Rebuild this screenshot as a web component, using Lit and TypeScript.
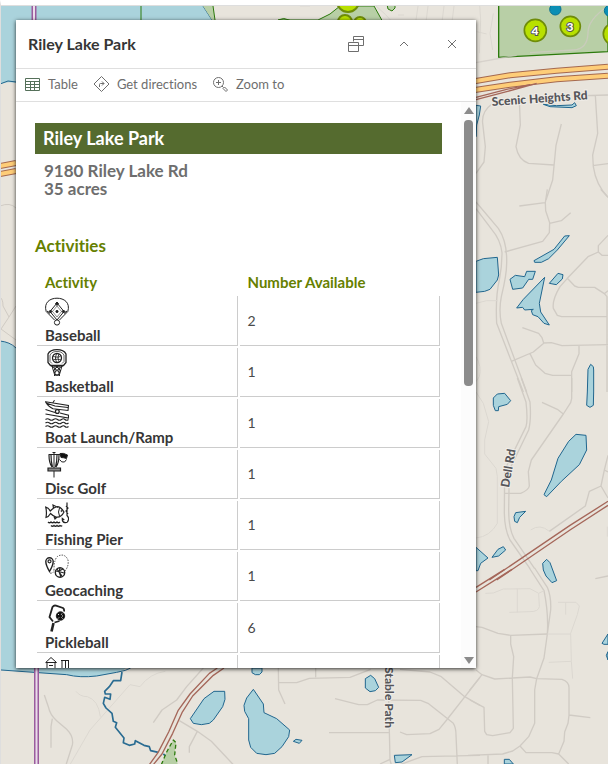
import { LitElement, html, svg, css, type SVGTemplateResult } from "lit";
import { customElement } from "lit/decorators.js";

interface Activity {
  name?: string;
  count?: number;
  icon: SVGTemplateResult;
  tall?: boolean;
}

const activities: Activity[] = [
  {
    name: "Baseball",
    count: 2,
    tall: true,
    icon: svg`<path d="M9.500 22.500 1.200 14C-1.500 5 5 .7 12 .7S25.500 5 22.800 14L14.500 22.500"/><path d="M12 5.500 19 14 12 22.500 5 14Z"/><path d="M12 8.500 16.500 14 12 19.500 7.500 14Z" stroke-width=".5"/><circle cx="12" cy="14" r="1.100" fill="#222"/><path d="M12 4.500 13.500 6 12 8 10.500 6ZM4 14l1.500-1.500L7 14l-1.500 1.500ZM17 14l1.500-1.500L20 14l-1.500 1.500Z" fill="#222"/><circle cx="12" cy="25" r="2.600"/><path d="M2 13.500 5 16M22 13.500 19 16"/>`,
  },
  {
    name: "Basketball",
    count: 1,
    icon: svg`<path d="M5.500 16.500 3 13.500V5C5 1 9 .7 12 .7S19 1 21 5v8.500l-2.500 3Z" stroke-width="1.300"/><path d="M7 14.500 5 12.500V6c2-3 4-3.500 7-3.500S17 3 19 6v6.500l-2 2" stroke-width=".7"/><circle cx="12" cy="9" r="4.500" stroke-width="1.300"/><path d="M8 7c4 2 7 1 8-.5M8 11c3-1 6-1 8 0M12 4.500c-2 3-2 6 0 9M14 5c-1.500 3-1 6 .5 8" stroke-width=".9"/><path d="M6 17h12M7 17l3 10M17 17l-3 10M7 17l8 7M17 17l-8 7M11 17l5 5M13 17l-5 5M10 17v10M14 17v10M9 27l2-2 1 2 1-2 2 2"/>`,
  },
  {
    name: "Boat Launch/Ramp",
    count: 1,
    icon: svg`<path d="M.5 1.800 23.500 5.500 23 10.500 8 8.800Q2.500 6 .5 1.800ZM1 3 10 6l13 1.500M8 2.500l1.500-2.200" stroke-width="1.100"/><path d="M.5 9.500 10 12.500M15 13l8.500 2.200V18L.5 14" stroke-width="1.100"/><circle cx="12.300" cy="11.500" r="1.900" stroke-width="1.300"/><path d="M.5 19.500q2-1.500 4 0t4 0 4 0 4 0 3.500 0 3.500 0M.5 23q2-1.500 4 0t4 0 4 0 4 0 3.500 0 3.500 0M.5 26.500q2-1.500 4 0t4 0 4 0 4 0 3.500 0 3.500 0" stroke-width="1.200"/>`,
  },
  {
    name: "Disc Golf",
    count: 1,
    icon: svg`<path d="M3.500 3.500h12M7.500 1.500h3" stroke-width="1.200"/><path d="M9 1.500v16M9 20v6.500" stroke-width="1"/><path d="M4 4q0 8 3 12M6 4q0 7 1.500 12M14 4q0 8-3 12M12 4q0 7-1.500 12" stroke-width="1.200"/><path d="M3 17h12.500v3H3Z" fill="#888" stroke-width="1.200"/><path d="M15 2.500q3-1 7.500 1.500l-1 3.500q-3-1-5.500-1Z" fill="#111"/><path d="M14.500 8.500q2 3.500 5 2.500l2-2.500"/>`,
  },
  {
    name: "Fishing Pier",
    count: 1,
    icon: svg`<path d="M.7 5q3 1 4.500 4Q8 6 11 5q4-1.500 8 5-3 6-8 5-3-1-5.500-3.500Q3.500 15 1 15.500 2 10 .7 5ZM8.500 6.500 8 3l5 2.500M9 14.500l1 2.500 2-2" stroke-width="1.200"/><path d="M14.500 6q-2 4 0 8"/><circle cx="16.500" cy="9" r=".6"/><path d="M22 .5v13q2 2 1.500 4-.7 3.500-3.500 3.200-3-.4-2.700-4.200l2 1.500M21 4l2 2-2 3 2 3" stroke-width="1.200"/><path d="M3 20q1.500 1.500 3 0 1.500 1.500 3 0 1.500 1.500 3 0 1.500 1.500 3 0M6 23.500q1.500 1.500 3 0 1.500 1.500 3 0 1.500 1.500 3 0 1.500 1 2 0" stroke-width="1.300"/>`,
  },
  {
    name: "Geocaching",
    count: 1,
    icon: svg`<path d="M4.500 18.500Q.8 12 .8 8.500A3.700 3.700 0 0 1 8.200 8.500Q8.200 12 4.500 18.500Z" stroke-width="1.400"/><circle cx="4.500" cy="8.300" r="1.500" stroke-width="1.200"/><path d="M5 20q4 1 4-4 0-10 4-13 7-3 10 4 1 6-3 11" stroke-width=".8" stroke-dasharray="1.500 1.200"/><circle cx="15" cy="19.500" r="4.700" stroke-width="1.400"/><path d="M11 18q5 1 8 2M15 15l-1 4 2 5M12 16l5 7M18 16l-4 2" stroke-width="1.100"/>`,
  },
  {
    name: "Pickleball",
    count: 6,
    tall: true,
    icon: svg`<path d="M8 17 4.500 12.500 7.500 2.500Q9 .5 11 1.200l7 2.300Q19.500 4.500 19 7M9.500 18l5-1.500" stroke-width="1.800"/><path d="M8.500 18.500 6.500 27" stroke-width="2.600"/><circle cx="15.500" cy="11.500" r="4.200" fill="#111"/><path d="m13 9.500 1 1M17 9l-.7 1.200M13 14l1-1M17.500 14l-1-1M18 11.500h-1" stroke="#fff" stroke-width=".9"/>`,
  },
  {
    icon: svg`<path d="M.7 6.500 6 1.500 11.500 6.500ZM2 6.500v9M10 6.500v9M4 9.500h4"/><path d="M16 4.500h8M17 4.500V15M20.500 4.500V15M23.500 4.500V15"/>`,
  },
];

/* Map artwork. Each sheet is drawn at three units per map pixel. */
const sheet = (x: number, y: number, art: SVGTemplateResult) =>
  svg`<g transform="translate(${x} ${y}) scale(.33333)">${art}</g>`;

const northEast = svg`
  <path class="minor" d="M28 0 32 60 28 160M70 40 60 100 68 150M20 95 50 102"/>
  <path class="park" d="M86 0V172L414 155V0Z"/>
  <path class="road" d="M18 188 140 166M180 158 310 150Q352 148 354 100 352 60 414 18" opacity=".7"/>
  <path class="casing" d="M0 246 120 226 260 212 414 200"/><path class="highway" d="M0 246 120 226 260 212 414 200"/>
  <path class="casing" d="M0 272 120 254 260 238 414 227"/><path class="highway" d="M0 272 120 254 260 238 414 227"/>
  <path class="ramp" d="M18 292 110 268 180 254M18 299 110 275 200 250"/>
  <path class="road" d="M66 312Q34 335 38 370L46 440 42 486 18 520M148 300 151 375 138 440Q145 480 176 490L252 495M274 372 258 436 248 540 228 600M376 286 383 400 368 465 370 500Q378 555 414 592M368 497 414 491M340 287 414 285"/>
  <path class="water" d="M18 316 32 318 28 345 20 375 18 410ZM220 313 260 317 306 315 314 308 319 317 306 323 240 320Z"/>
  <circle class="pond" cx="256" cy="28" r="17"/><circle class="pond" cx="420" cy="32" r="17"/>
  <circle class="pin" cx="196" cy="91" r="33"/><circle class="pin" cx="301" cy="79" r="30"/><circle class="pin" cx="432" cy="102" r="32"/>
`;

const east = svg`
  <path class="road" d="M18 56 65 118Q92 150 96 188 96 230 88 270 76 320 80 400L160 606"/>
  <path class="road" d="M18 36 85 115Q112 155 110 220 110 255 94 320 86 360 94 400L170 606"/>
  <path class="road" d="M104 186 218 154 238 128 239 98 227 62 226 38 232 -2M148 48 225 38M239 100 274 92 302 68M392 -2 414 22M414 136 385 167V186L396 196H414M385 186 354 200 292 265 270 290Q246 330 250 355L262 376 275 380H411M292 265 314 288 325 292H374L403 311 414 302M403 311 411 320V606M157 413 206 430 216 443 221 459M124 514 190 486 222 459 244 458 276 467 414 464M180 491 197 525 225 550 248 556H304M327 467V491L305 545V606"/>
  <path class="minor" d="M18 340Q50 328 82 332M18 500Q36 530 28 560L18 575"/>
  <path class="water" d="M18 214 40 206 82 202 86 255 82 270 60 298 44 304 18 307ZM192 212 252 178 284 138 298 137 262 180 236 206 214 217H194ZM128 298 120 268 136 256 164 260 170 244H196L188 268 176 268 158 294ZM238 280 264 250 279 254 277 267 259 284ZM224 262 208 340 212 366 238 405 222 400 204 380 188 374 184 362 190 358 164 360 158 352 140 354 160 328Z"/>
`;

const southEast = svg`
  <path class="road" d="M142 -6 168 66Q174 120 168 140L104 270 103 400Q104 450 120 480L180 566M154 -6 180 66Q184 120 176 150L118 270 116 390Q116 445 132 475L194 566"/>
  <path class="road" d="M305 -6V56L302 68 280 102 184 240 175 275 178 318Q176 330 152 340H103M216 67 262 88 280 102M238 454 346 378 358 334 393 318 403 270 414 226M393 318 414 354M403 270 414 276"/>
  <path class="minor" d="M18 36 40 70 56 125 44 180V222L78 265 82 290V430Q60 470 18 474M182 450Q210 430 238 454M412 440V470"/>
  <path class="rail" d="M58 600 300 436 414 364M80 600 300 450 414 376"/>
  <path class="water" d="M352 36 350 76 360 82 370 76 371 36V-30L370 -40 362 -47 354 -32ZM70 54 82 42 104 40 122 62 112 73 86 80 85 92H76L70 76ZM222 344 244 300 264 235 296 184 318 163 348 166 350 210 328 254 274 304 230 350ZM132 410 137 398 167 394 149 412 142 428 134 424ZM66 532 84 508 100 500 107 510 86 528ZM18 502 54 534 32 550 24 572H18ZM218 550 230 538 240 548 260 602 246 608 228 588 220 570Z"/>
`;

const southEastCorner = svg`
  <path class="road" d="M178 -6 222 62Q236 130 232 192L222 264 200 326 194 360V460L176 500 150 528 128 543 98 552 -6 556M194 -6 232 52Q244 80 242 120L232 192"/>
  <path class="road" d="M18 170 36 172 84 190 122 196 232 192M122 196V222L131 260 127 324 130 475 120 488 68 497 50 494 44 484 42 412 0 390M18 300 36 314 74 327 180 321 200 326 276 328Q298 336 297 354V436L294 460 284 486 282 514 266 552M36 314 -2 362M297 435 361 443M150 528 168 548H246L266 552 296 582M54 556V584"/>
  <path class="minor" d="M46 70 70 69 100 57 180 56 206 70 222 62M142 56V127M206 70 208 110Q206 125 180 125L118 127M264 97H318L328 108 322 134 302 190 304 274 308 326M287 97V134M232 192H302M236 277 304 274"/>
  <path class="road" d="M376 26 414 18"/>
  <path class="rail" d="M18 52 104 -2M18 66 126 -2"/>
  <path class="water" d="M414 192 396 220 402 223H414ZM414 245 409 256 414 270ZM103 582V568H118L130 582Z"/>
`;

const southWest = svg`
  <path class="road" d="M133 165 145 200Q150 225 170 242L200 268Q222 290 217 315L198 375M157 236 153 260V323M610 84 560 140 530 180 486 210 460 248M538 242 592 274 634 304 700 374M592 274 568 320V338"/>
  <path class="minor" d="M210 374 270 270 390 134 420 140Q450 100 496 94M228 154Q240 170 262 170 295 180 301 230"/>
  <path class="lake" d="M3 70H392Q372 95 350 97L290 108Q240 114 200 104L115 98 3 90Z"/><path class="shore" d="M3 90 115 98 200 104Q240 114 290 108L350 97Q380 92 392 84"/>
  <path class="creek" d="M366 96 362 122 340 122 328 140 314 154 316 162 332 162 330 178 314 172 310 190 318 204 336 220 340 244 350 248 346 262 372 294 370 308 388 316 404 312 406 302 432 316 448 320 452 332 478 338M490 342 500 350 502 374"/>
  <path class="park dashed" d="M484 374 500 336 520 300 528 308 524 345 534 374Z"/>
  <path class="gap" d="M660 84 632 100 575 165 540 215 512 280 480 340 454 374"/>
  <path class="rail" d="M652 84 628 100 570 162 534 212 506 276 474 338 448 374M672 84 640 106 578 168 546 218 518 280 486 342 460 374"/>
  <path class="water" d="M571 236 612 176 642 154H674L675 178 668 200 640 240 628 250 604 254 580 250Z"/>
`;

const south = svg`
  <path class="road" d="M115 84 116 150 135 192M116 127 170 128 208 115 330 112 392 88M227 84V112M285 176 356 194H382L412 180 542 181 564 190 640 250Q648 262 648 285L652 374M267 278H446M446 84V181L450 360 454 374M480 276 500 284 570 281 597 268 620 240 720 112M480 88 570 96 604 110 674 170 720 196M420 372 450 358M480 374 546 350 720 346"/>
  <path class="water" d="M40 148 70 192 72 218 110 236 149 270 146 290 126 320 104 340 78 344 50 340 32 322 26 300V236L14 214 12 196 20 174ZM160 304 168 298 186 301 178 310ZM36 84V98L46 104H58L66 96V84ZM376 116 392 106 404 116 416 142 406 152 390 155 376 144ZM463 346 516 344 486 366 466 368Z"/>
`;

const map = svg`
  <rect class="land" width="1600" height="1600"/>
  <path class="lake" d="M0 6H203L212 20 150 83H16Q8 81 0 84Z"/>
  <path class="shore" d="M0 84 8 81 16 82M203 6 212 20"/>
  <path class="park-fill" d="M203 6 212 20H215L213 6Z"/>
  <path class="boundary" d="M141 0V24M213 6 215 20"/>
  <path class="park" d="M278 20Q284 17 289 20L300 24H384L374 6H340L330 14 318 20ZM386 0 388 9 392 11 395 8V0Z"/>
  <path class="minor fine" d="M376 6Q386 14 394 24M418 6 416 20M428 6 426 22M444 6 442 22M454 6 452 22M398 15H404M300 6H310"/>
  <circle class="pin" cx="348" cy="1" r="11"/><circle class="pin" cx="345" cy="22" r="7"/><circle class="pin" cx="360" cy="23" r="6"/>
  <path class="thin-casing" d="M0 166 16 163M0 174 16 171"/><path class="thin-highway" d="M0 166 16 163M0 174 16 171"/>
  <path class="road fine" d="M0 206Q10 202 16 208M0 297Q3 299 3 306L9 317 16 306M9 317 1 329 16 340"/>
  <path class="lake" d="M0 341Q10 342 20 352V668H0Z"/><path class="shore" d="M0 341Q10 342 16 348"/>
  ${sheet(470, 0, northEast)}${sheet(470, 190, east)}${sheet(470, 570, southEastCorner)}${sheet(470, 380, southEast)}
  ${sheet(240, 640, south)}${sheet(0, 640, southWest)}
  <path class="county" d="M34 6V24M36.500 660V1600"/><path class="county-core" d="M34 6V24M36.500 660V1600"/>
  <text class="num" x="535" y="35">4</text><text class="num" x="570" y="31">3</text>
  <text transform="translate(492 106) rotate(-4)">Scenic Heights Rd</text>
  <text transform="translate(509 488) rotate(-80)">Dell Rd</text>
  <text transform="translate(385 667) rotate(90)">Stable Path</text>
`;

@customElement("park-map")
export class ParkMap extends LitElement {
  static styles = css`
    :host { display: block; overflow: hidden; }
    svg { display: block; width: 100%; height: 100%; }
    .land { fill: #e8e4dc; }
    path { fill: none; stroke-linejoin: round; }
    .road { stroke: #d0cbc4; stroke-width: 4; }
    .minor { stroke: #dcd8d1; stroke-width: 3; }
    .fine { stroke-width: 1; }
    .casing { stroke: #a5694f; stroke-width: 18; }
    .highway { stroke: #fecd78; stroke-width: 12; }
    .thin-casing { stroke: #a5694f; stroke-width: 6; }
    .thin-highway { stroke: #fecd78; stroke-width: 4; }
    .ramp, .rail { stroke: #a5675a; stroke-width: 4; }
    .gap { stroke: #e8e4dc; stroke-width: 12; }
    .water { fill: #aad3dc; stroke: #20658e; stroke-width: 3; }
    .lake { fill: #aad3dc; }
    .shore { stroke: #20658e; stroke-width: 1; }
    g .shore { stroke-width: 3; }
    .creek { stroke: #2a6c92; stroke-width: 5; }
    .park { fill: #b8cfa6; stroke: #2c7a0c; stroke-width: 1; }
    .park-fill { fill: #b8cfa6; }
    g .park { stroke-width: 4; }
    g .dashed { stroke-dasharray: 12 8; }
    .boundary { stroke: #2c7a0c; stroke-width: 1; }
    .county { stroke: #9a5c9e; stroke-width: 5; }
    .county-core { stroke: #eadcea; stroke-width: 2; }
    .pond { fill: #0b8fb5; stroke: #0a6f92; stroke-width: 3; }
    .pin { fill: #b8e000; stroke: #6f8c0a; stroke-width: 2; }
    g .pin { stroke-width: 5; }
    text {
      font: 900 12px Lato, "Open Sans", sans-serif;
      fill: #56565a;
      stroke: #f0ede8;
      stroke-width: 2px;
      paint-order: stroke;
    }
    .num { fill: #fff; stroke: #555; text-anchor: middle; }
  `;

  render() {
    return html`<svg viewBox="0 0 608 764" preserveAspectRatio="xMinYMin slice" role="img" aria-label="Map">${map}</svg>`;
  }
}

@customElement("app-root")
export class AppRoot extends LitElement {
  static styles = css`
    :host {
      display: block;
      position: relative;
      box-sizing: border-box;
      height: 100vh;
      padding: 20px 16px 96px;
      overflow: hidden;
      background: #fff;
      color: #363636;
      font-family: Lato, "Open Sans", sans-serif;
      font-variant-ligatures: none;
    }
    * { box-sizing: border-box; }
    park-map { position: absolute; inset: 0; }
    .frame {
      position: absolute;
      inset: 0;
      border-top: 5px solid #fff;
      border-left: 1px solid #dedede;
      box-shadow: inset 0 1px #dedede;
      pointer-events: none;
    }
    .panel {
      position: relative;
      display: flex;
      flex-direction: column;
      width: 100%;
      max-width: 460px;
      height: 100%;
      background: #fff;
      box-shadow: 0 1px 4px rgba(0, 0, 0, 0.8);
    }
    button {
      border: 0;
      padding: 0;
      background: none;
      color: #6e6e6e;
      font: inherit;
      cursor: pointer;
    }
    svg { display: block; fill: none; stroke: currentColor; }
    .header {
      display: flex;
      height: 49px;
      padding-left: 12px;
      border-bottom: 1px solid #dfdfdf;
      align-items: center;
    }
    .header h1 { flex: 1; margin: 0; font-size: 16px; line-height: 20px; font-weight: 700; }
    .header button { display: grid; place-items: center; width: 48px; height: 48px; }
    .toolbar {
      display: flex;
      gap: 15px;
      height: 33px;
      padding: 0 8px 2px;
      border-bottom: 1px solid #dfdfdf;
    }
    .toolbar button { display: flex; align-items: center; gap: 7px; font-size: 13px; line-height: 16px; }
    .toolbar .grid { color: #55705a; }
    .body { display: flex; flex: 1; min-height: 0; }
    .scroll { flex: 1; padding: 21px 19px 0; overflow-y: auto; scrollbar-width: none; }
    .banner {
      margin: 0;
      padding: 0 8px;
      background: #556b2f;
      color: #fff;
      font-size: 18px;
      line-height: 31px;
      font-weight: 700;
    }
    address { padding: 8px 9px 0; color: #6e6e6e; font-size: 17px; line-height: 18px; font-weight: 700; font-style: normal; }
    .section { margin: 37px 0 11px; color: #668000; font-size: 17px; line-height: 22px; font-weight: 700; }
    table { width: 100%; table-layout: fixed; border-collapse: separate; border-spacing: 2px; }
    th { padding: 0 8px; text-align: left; font-size: 15px; line-height: 18px; }
    thead th { height: 24px; color: #668000; }
    tbody th, td { border-right: 1px solid #ccc; border-bottom: 1px solid #ccc; }
    tbody th { padding-top: 1px; padding-bottom: 1px; }
    td { padding: 0 8px; color: #4a4a4a; font-size: 14px; line-height: 18px; }
    .icon { width: 24px; height: 28px; color: #222; }
    .icon.tall { height: 29px; }
    .rail {
      display: flex;
      flex-direction: column;
      align-items: center;
      justify-content: space-between;
      width: 15px;
      padding: 5px 0 4px;
      background: #fcfcfc;
    }
    .track { flex: 1; padding: 5px 0 4px; }
    .thumb { width: 9px; height: 50%; border-radius: 4px; background: #8b8b8b; }
    .arrow { width: 10px; height: 8px; fill: #8b8b8b; stroke: none; }
  `;

  render() {
    return html`
      <park-map></park-map>
      <div class="frame"></div>
      <section class="panel" aria-label="Park details">
        <header class="header">
          <h1>Riley Lake Park</h1>
          <button aria-label="Dock">
            <svg width="16" height="16"><path d="M5.500 5.500v-5h10v9h-5M5.500 3.500h10M.5 6.500h10v9H.5ZM.5 9.500h10"/></svg>
          </button>
          <button aria-label="Collapse">
            <svg width="16" height="16"><path d="m4 10 4-4 4 4"/></svg>
          </button>
          <button aria-label="Close">
            <svg width="16" height="16"><path d="m4 4 8 8M12 4l-8 8"/></svg>
          </button>
        </header>
        <nav class="toolbar">
          <button>
            <svg class="grid" width="17" height="16"><path d="M1.500 2.500h14v12h-14ZM1.500 5.500h14M1.500 8.500h14M1.500 11.500h14M6.500 5.500v9M10.500 5.500v9"/></svg>
            Table
          </button>
          <button>
            <svg width="17" height="18"><path d="M8.500 1.500 16 9l-7.500 7.500L1 9ZM6.500 12V9.500q0-1 1-1H11M9 6.500l2 2-2 2"/></svg>
            Get directions
          </button>
          <button>
            <svg width="17" height="16"><circle cx="6.500" cy="6.500" r="5"/><path d="M6.500 4v5M4 6.500h5M10 10l1.500 1.500M11 12.500 12.500 11l3 3-1.500 1.500Z"/></svg>
            Zoom to
          </button>
        </nav>
        <div class="body">
          <div class="scroll">
            <h2 class="banner">Riley Lake Park</h2>
            <address>9180 Riley Lake Rd<br />35 acres</address>
            <h3 class="section">Activities</h3>
            <table>
              <thead>
                <tr><th scope="col">Activity</th><th scope="col">Number Available</th></tr>
              </thead>
              <tbody>
                ${activities.map(
                  (a) => html`<tr>
                    <th scope="row">
                      <svg class="icon ${a.tall ? "tall" : ""}" viewBox="0 0 24 28">${a.icon}</svg>
                      ${a.name}
                    </th>
                    <td>${a.count}</td>
                  </tr>`
                )}
              </tbody>
            </table>
          </div>
          <div class="rail" aria-hidden="true">
            <svg class="arrow" viewBox="0 0 10 8"><path d="M5 0 10 7H0Z"/></svg>
            <div class="track"><div class="thumb"></div></div>
            <svg class="arrow" viewBox="0 0 10 8"><path d="M5 8 10 1H0Z"/></svg>
          </div>
        </div>
      </section>
    `;
  }
}
